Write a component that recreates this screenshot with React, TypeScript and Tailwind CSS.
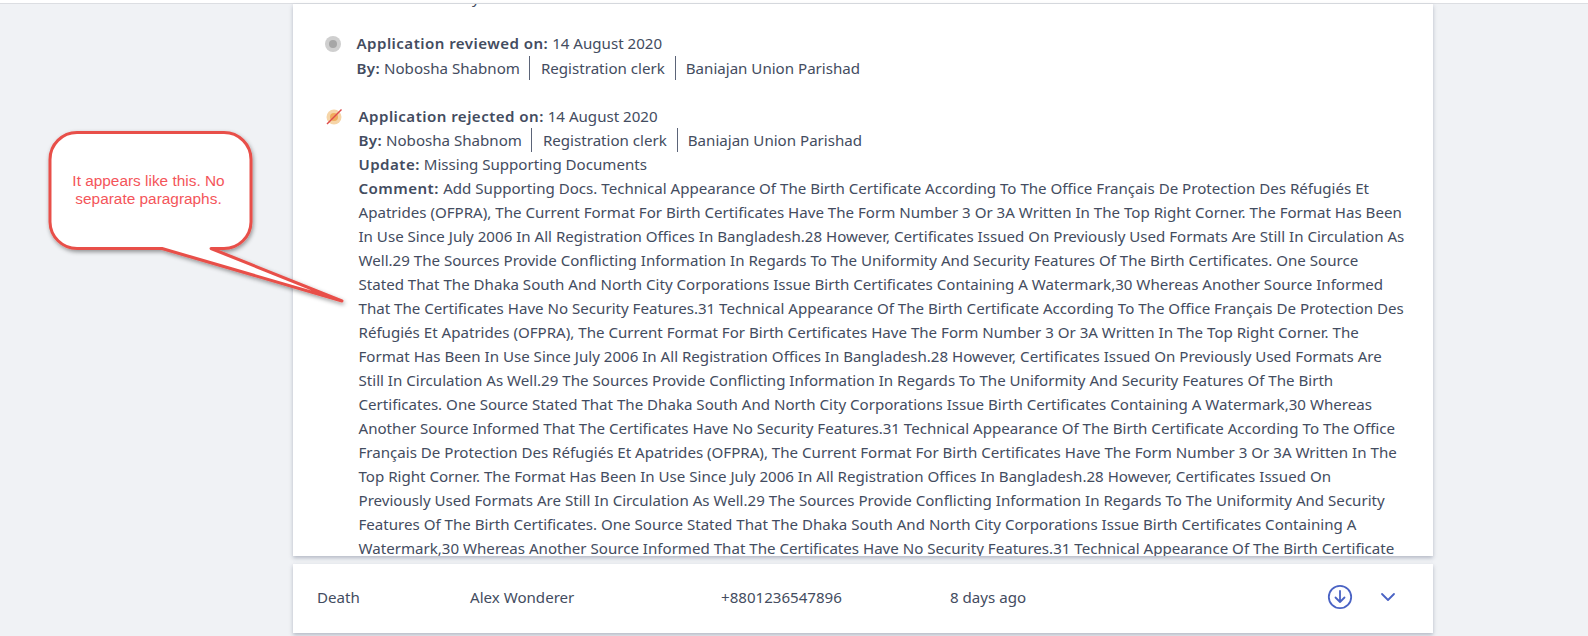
const comment = [
  "Add Supporting Docs. Technical Appearance Of The Birth Certificate According To The Office Français De Protection Des Réfugiés Et",
  "Apatrides (OFPRA), The Current Format For Birth Certificates Have The Form Number 3 Or 3A Written In The Top Right Corner. The Format Has Been",
  "In Use Since July 2006 In All Registration Offices In Bangladesh.28 However, Certificates Issued On Previously Used Formats Are Still In Circulation As",
  "Well.29 The Sources Provide Conflicting Information In Regards To The Uniformity And Security Features Of The Birth Certificates. One Source",
  "Stated That The Dhaka South And North City Corporations Issue Birth Certificates Containing A Watermark,30 Whereas Another Source Informed",
  "That The Certificates Have No Security Features.31 Technical Appearance Of The Birth Certificate According To The Office Français De Protection Des",
  "Réfugiés Et Apatrides (OFPRA), The Current Format For Birth Certificates Have The Form Number 3 Or 3A Written In The Top Right Corner. The",
  "Format Has Been In Use Since July 2006 In All Registration Offices In Bangladesh.28 However, Certificates Issued On Previously Used Formats Are",
  "Still In Circulation As Well.29 The Sources Provide Conflicting Information In Regards To The Uniformity And Security Features Of The Birth",
  "Certificates. One Source Stated That The Dhaka South And North City Corporations Issue Birth Certificates Containing A Watermark,30 Whereas",
  "Another Source Informed That The Certificates Have No Security Features.31 Technical Appearance Of The Birth Certificate According To The Office",
  "Français De Protection Des Réfugiés Et Apatrides (OFPRA), The Current Format For Birth Certificates Have The Form Number 3 Or 3A Written In The",
  "Top Right Corner. The Format Has Been In Use Since July 2006 In All Registration Offices In Bangladesh.28 However, Certificates Issued On",
  "Previously Used Formats Are Still In Circulation As Well.29 The Sources Provide Conflicting Information In Regards To The Uniformity And Security",
  "Features Of The Birth Certificates. One Source Stated That The Dhaka South And North City Corporations Issue Birth Certificates Containing A",
  "Watermark,30 Whereas Another Source Informed That The Certificates Have No Security Features.31 Technical Appearance Of The Birth Certificate",
];

function ByLine() {
  return (
    <div className="flex h-6 items-center">
      <span><b className="font-semibold tracking-[0.4px]">By:</b> Nobosha Shabnom</span>
      <span className="ml-[9px] flex h-6 items-center border-l border-[#5b6478] pl-[11px]">Registration clerk</span>
      <span className="ml-[10px] flex h-6 items-center border-l border-[#5b6478] pl-[10px]">Baniajan Union Parishad</span>
    </div>
  );
}

export default function App() {
  return (
    <div className="relative h-[636px] w-[1588px] overflow-hidden bg-[#f0f2f5] font-['Noto_Sans',sans-serif] text-[15.1px] leading-6 text-[#434c60]">
      <div className="h-[4px] border-b border-[#dcdee2] bg-white" />
      <div className="ml-[293px] w-[1140px]">
        <div className="relative h-[552px] overflow-hidden bg-white shadow-[0_2px_4px_rgba(70,80,110,0.35)]">
          <span className="absolute left-[179px] top-[-19px]">y</span>
          <div className="h-[27px]" />
          <div className="flex pl-[32px]">
            <svg width="16" height="16" viewBox="0 0 16 16" className="mt-[5px] shrink-0">
              <circle cx="8" cy="8" r="8" fill="#cfcfcf" />
              <circle cx="8" cy="8" r="4" fill="#a6a6a6" />
            </svg>
            <div className="ml-[15.5px]">
              <div className="h-[25px]"><b className="font-semibold tracking-[0.45px]">Application reviewed on:</b> 14 August 2020</div>
              <ByLine />
            </div>
          </div>
          <div className="mt-6 flex pl-[33px]">
            <svg width="16" height="18" viewBox="0 0 16 18" className="mt-[4px] shrink-0">
              <circle cx="8" cy="9" r="7.5" fill="#f6d5a8" />
              <circle cx="8" cy="9" r="4" fill="#f0ad5e" />
              <line x1="1" y1="16" x2="15.5" y2="1.5" stroke="#de4a4a" strokeWidth="1.4" />
            </svg>
            <div className="ml-[16.5px] w-[1060px]">
              <div className="h-6"><b className="font-semibold tracking-[0.45px]">Application rejected on:</b> 14 August 2020</div>
              <ByLine />
              <div className="h-6"><b className="font-semibold tracking-[0.45px]">Update:</b> Missing Supporting Documents</div>
              {comment.map((line, i) => (
                <div key={i} className="h-6 whitespace-nowrap">
                  {i === 0 && <b className="font-semibold tracking-[0.45px]">Comment: </b>}
                  {line}
                </div>
              ))}
            </div>
          </div>
        </div>
        <div className="mt-2 flex h-[69px] items-center bg-white pb-1 pl-6 shadow-[0_2px_4px_rgba(70,80,110,0.35)]">
          <span className="w-[153px]">Death</span>
          <span className="w-[251px]">Alex Wonderer</span>
          <span className="w-[229px]">+8801236547896</span>
          <span className="w-[377px]">8 days ago</span>
          <svg width="26" height="26" viewBox="0 0 26 26" fill="none" stroke="#4a63c4" strokeWidth="1.8" strokeLinecap="round" strokeLinejoin="round">
            <circle cx="13" cy="13" r="11.2" />
            <path d="M13 7v11M8.500 13.500 13 18l4.500-4.500" />
          </svg>
          <svg width="16" height="10" viewBox="0 0 16 10" fill="none" stroke="#4a63c4" strokeWidth="1.8" strokeLinecap="round" strokeLinejoin="round" className="ml-[27px]">
            <path d="M2 2l6 6 6-6" />
          </svg>
        </div>
      </div>

      <svg width="360" height="200" viewBox="0 0 360 200" className="absolute left-0 top-[120px]">
        <defs>
          <filter id="sh" x="-10%" y="-10%" width="120%" height="130%">
            <feDropShadow dx="1" dy="2" stdDeviation="2" floodColor="#000" floodOpacity="0.4" />
          </filter>
        </defs>
        <path
          d="M77 12.500H224A27 27 0 0 1 251 39.500V102A27 27 0 0 1 224 128.500H211L342 181L162 128.500H77A27 27 0 0 1 50 102V39.500A27 27 0 0 1 77 12.500Z"
          fill="#fff"
          stroke="#e8504a"
          strokeWidth="3"
          strokeLinejoin="round"
          filter="url(#sh)"
        />
      </svg>
      <div className="absolute left-[50px] top-[172px] w-[197px] text-center font-['Liberation_Sans',sans-serif] text-[15.4px] leading-[18.3px] text-[#f4555a]">
        It appears like this. No<br />separate paragraphs.
      </div>
    </div>
  );
}
